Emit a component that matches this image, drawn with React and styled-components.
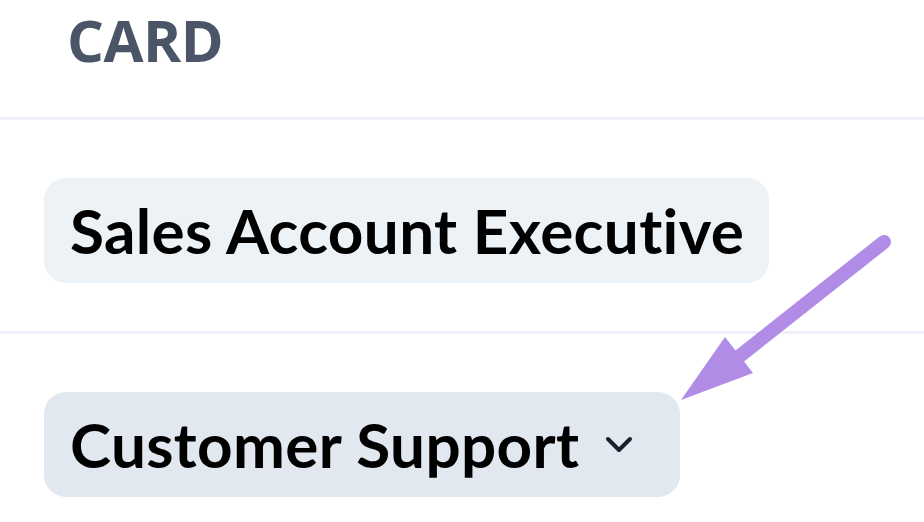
import React from 'react';
import styled, { createGlobalStyle } from 'styled-components';

const GlobalStyle = createGlobalStyle`
  html, body {
    margin: 0;
    padding: 0;
    background: #ffffff;
  }
  body {
    font-family: "Noto Sans", "Open Sans", sans-serif;
    overflow: hidden;
  }
`;

const items = [
  { id: 1, label: 'Sales Account Executive', tone: 'light' },
  { id: 2, label: 'Customer Support', tone: 'dark', dropdown: true },
];

const Chevron = () => (
  <svg width="28" height="20" viewBox="0 0 28 20" fill="none">
    <path d="M3 4 L14 15 L25 4" stroke="#1a202c" strokeWidth="4" strokeLinecap="round" strokeLinejoin="round" />
  </svg>
);

const Arrow = () => (
  <svg width="924" height="522" viewBox="0 0 924 522">
    <line x1="884" y1="242" x2="722" y2="370" stroke="#b18ce6" strokeWidth="14" strokeLinecap="round" />
    <polygon points="681,400 725,337 753,373" fill="#b18ce6" />
  </svg>
);

const App = () => {
  return (
    <Page>
      <GlobalStyle />
      <Header>
        <span>CARD</span>
      </Header>
      {items.map(item => (
        <Row key={item.id}>
          <Pill tone={item.tone}>
            <span>{item.label}</span>
            {item.dropdown && <Chevron />}
          </Pill>
        </Row>
      ))}
      <Overlay>
        <Arrow />
      </Overlay>
    </Page>
  );
};

const Page = styled.div`
  position: relative;
  width: 924px;
  height: 522px;
  background: #fff;
  overflow: hidden;
`;

const Header = styled.div`
  height: 120px;
  box-sizing: border-box;
  padding: 2px 0 0 67px;
  border-bottom: 3px solid #eeeff9;

  span {
    display: inline-block;
    font-family: "Open Sans", sans-serif;
    font-weight: 700;
    font-size: 58px;
    line-height: 75px;
    color: #4a5568;
    letter-spacing: -0.5px;
  }
`;

const Row = styled.div`
  display: flex;
  align-items: flex-start;
  height: 214px;
  box-sizing: border-box;
  padding: 58px 0 0 44px;
  border-bottom: 3px solid #eeeff9;

  &:last-of-type {
    border-bottom: none;
  }
`;

const Pill = styled.div`
  display: flex;
  align-items: center;
  gap: 26px;
  height: 105px;
  box-sizing: border-box;
  padding: 0 25px 0 26px;
  border-radius: 22px;
  background: ${p => (p.tone === 'dark' ? '#e2e8f0' : '#edf2f7')};
  color: #000;

  span {
    font-family: Lato, "Noto Sans", sans-serif;
    font-weight: 700;
    font-size: 62px;
    line-height: 1.2;
    letter-spacing: 0.35px;
    font-variant-ligatures: none;
  }

  svg {
    margin-right: 22px;
  }
`;

const Overlay = styled.div`
  position: absolute;
  inset: 0;
  pointer-events: none;
`;

export default App;
